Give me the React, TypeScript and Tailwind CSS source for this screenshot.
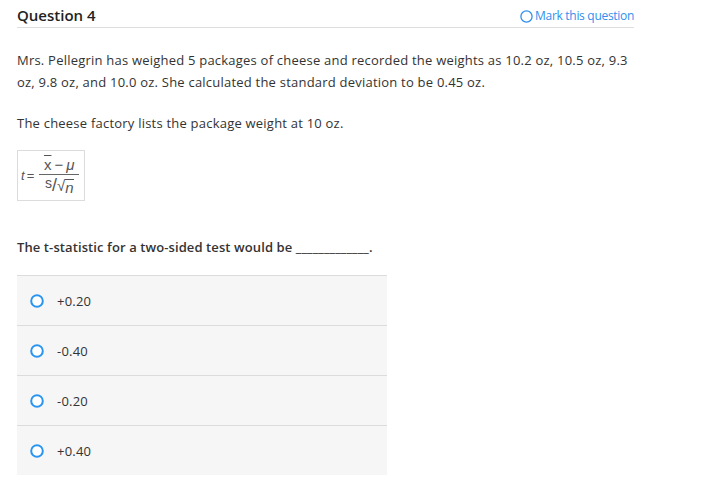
const options = ["+0.20", "-0.40", "-0.20", "+0.40"];

function Radio() {
  return (
    <svg width="14" height="14" viewBox="0 0 14 14" className="shrink-0">
      <circle cx="7" cy="7" r="5.8" fill="white" stroke="#2a95f0" strokeWidth="2" />
    </svg>
  );
}

function Formula() {
  return (
    <div className="flex h-[51px] w-[68px] items-center border border-[#dcdcdc] pl-[3px] tracking-normal text-[#555] [font-family:'Liberation_Sans',sans-serif]">
      <span className="text-[13px] font-light italic">t</span>
      <span className="ml-[2px] text-[13px]">=</span>
      <div className="ml-[5px] flex flex-col items-center">
        <div className="flex items-baseline px-[2px] text-[15px] leading-[17px]">
          <span className="overline">x</span>
          <span className="mx-[3px]">−</span>
          <span className="italic">μ</span>
        </div>
        <div className="mt-[1px] h-px w-[40px] bg-[#666]" />
        <div className="flex h-[20px] items-end text-[14px] leading-[18px]">
          <span className="mb-[3px]">s</span>
          <span className="text-[18px] font-light leading-[20px]">/</span>
          <span className="text-[15px] leading-[18px]">√</span>
          <span className="mt-[3px] border-t border-[#555] text-[15px] italic leading-[15px]">n</span>
        </div>
      </div>
    </div>
  );
}

export default function App() {
  return (
    <div className="min-h-[491px] w-[701px] bg-white text-[#333] [font-family:'Open_Sans',sans-serif]">
      <div className="w-[634px] pl-[17px]">
        <div className="flex items-end justify-between border-b border-[#dedede] pt-[6px] pb-[3px]">
          <h2 className="text-[15px] font-semibold leading-[18px] text-[#222]">Question 4</h2>
          <button className="flex items-center gap-[2px] text-[12px] leading-[16px] tracking-[-0.3px] text-[#2f90ef]">
            <svg width="13" height="13" viewBox="0 0 13 13">
              <circle cx="6.5" cy="6.5" r="5.6" fill="none" stroke="#2f90ef" strokeWidth="1.3" />
            </svg>
            Mark this question
          </button>
        </div>
      </div>

      <div className="pl-[17px] text-[13px] tracking-[0.22px]">
        <p className="mt-[21px] w-[620px] leading-[22px]">
          Mrs. Pellegrin has weighed 5 packages of cheese and recorded the weights as 10.2 oz, 10.5 oz, 9.3 oz, 9.8 oz, and 10.0 oz. She calculated the standard deviation to be 0.45 oz.
        </p>
        <p className="mt-[19px] leading-[22px]">The cheese factory lists the package weight at 10 oz.</p>
        <div className="mt-[16px]">
          <Formula />
        </div>
        <p className="mt-[35px] font-semibold leading-[22px] tracking-[0.1px]">
          The t-statistic for a two-sided test would be _____________.
        </p>

        <div className="mt-[17px] w-[370px]">
          {options.map((o) => (
            <label key={o} className="flex h-[50px] items-center border-t border-[#dcdcdc] bg-[#f6f6f6] pl-[13px]">
              <Radio />
              <span className="ml-[13px] leading-[16px]">{o}</span>
            </label>
          ))}
        </div>
      </div>
    </div>
  );
}
